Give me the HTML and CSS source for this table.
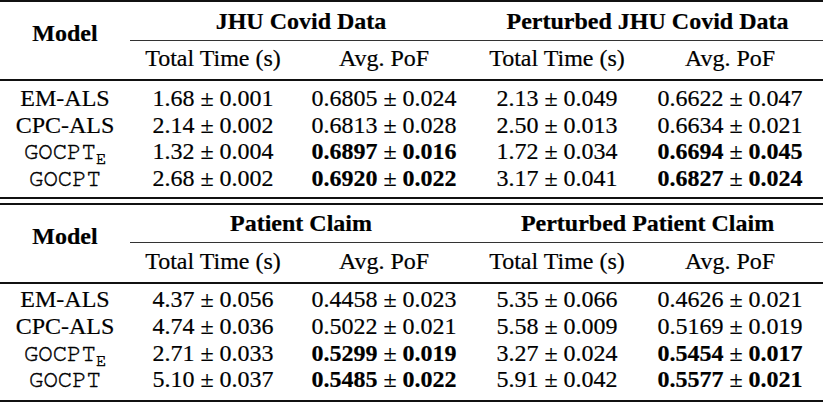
FILE: index.html
```html
<!DOCTYPE html>
<html lang="en">
<head>
<meta charset="utf-8">
<title>Results</title>
<link rel="stylesheet" href="styles.css">
</head>
<body>
<table class="res res-a">
  <colgroup><col class="c1"><col class="c2"><col class="c3"><col class="c4"><col class="c5"></colgroup>
  <thead>
    <tr class="grp">
      <th rowspan="2" class="model">Model</th>
      <th colspan="2" class="span">JHU Covid Data</th>
      <th colspan="2" class="span">Perturbed JHU Covid Data</th>
    </tr>
    <tr class="subh">
      <th>Total Time (s)</th><th>Avg. PoF</th><th>Total Time (s)</th><th class="last">Avg. PoF</th>
    </tr>
  </thead>
  <tbody>
    <tr class="first"><td>EM-ALS</td><td>1.68 ± 0.001</td><td>0.6805 ± 0.024</td><td>2.13 ± 0.049</td><td class="last">0.6622 ± 0.047</td></tr>
    <tr><td>CPC-ALS</td><td>2.14 ± 0.002</td><td>0.6813 ± 0.028</td><td>2.50 ± 0.013</td><td class="last">0.6634 ± 0.021</td></tr>
    <tr><td><span class="mono">GOCPT<sub>E</sub></span></td><td>1.32 ± 0.004</td><td><b>0.6897</b> ± <b>0.016</b></td><td>1.72 ± 0.034</td><td class="last"><b>0.6694</b> ± <b>0.045</b></td></tr>
    <tr class="lastrow"><td><span class="mono">GOCPT</span></td><td>2.68 ± 0.002</td><td><b>0.6920</b> ± <b>0.022</b></td><td>3.17 ± 0.041</td><td class="last"><b>0.6827</b> ± <b>0.024</b></td></tr>
  </tbody>
</table>
<table class="res res-b">
  <colgroup><col class="c1"><col class="c2"><col class="c3"><col class="c4"><col class="c5"></colgroup>
  <thead>
    <tr class="grp">
      <th rowspan="2" class="model">Model</th>
      <th colspan="2" class="span">Patient Claim</th>
      <th colspan="2" class="span">Perturbed Patient Claim</th>
    </tr>
    <tr class="subh">
      <th>Total Time (s)</th><th>Avg. PoF</th><th>Total Time (s)</th><th class="last">Avg. PoF</th>
    </tr>
  </thead>
  <tbody>
    <tr class="first"><td>EM-ALS</td><td>4.37 ± 0.056</td><td>0.4458 ± 0.023</td><td>5.35 ± 0.066</td><td class="last">0.4626 ± 0.021</td></tr>
    <tr><td>CPC-ALS</td><td>4.74 ± 0.036</td><td>0.5022 ± 0.021</td><td>5.58 ± 0.009</td><td class="last">0.5169 ± 0.019</td></tr>
    <tr><td><span class="mono">GOCPT<sub>E</sub></span></td><td>2.71 ± 0.033</td><td><b>0.5299</b> ± <b>0.019</b></td><td>3.27 ± 0.024</td><td class="last"><b>0.5454</b> ± <b>0.017</b></td></tr>
    <tr class="lastrow"><td><span class="mono">GOCPT</span></td><td>5.10 ± 0.037</td><td><b>0.5485</b> ± <b>0.022</b></td><td>5.91 ± 0.042</td><td class="last"><b>0.5577</b> ± <b>0.021</b></td></tr>
  </tbody>
</table>
</body>
</html>
```

FILE: styles.css
```css
html, body {
  margin: 0;
  padding: 0;
  background: #fff;
}

body {
  font-family: "Liberation Serif", "Times New Roman", serif;
  font-size: 24px;
  color: #000;
  -webkit-text-stroke: 0.2px #000;
}

.res {
  border-collapse: separate;
  border-spacing: 0;
  table-layout: fixed;
  width: 823px;
  border-top: 2px solid #111;
  border-bottom: 2px solid #111;
}

.res-b {
  margin-top: 4px;
}

.c1 { width: 130px; }
.c2 { width: 166px; }
.c3 { width: 176px; }
.c4 { width: 170px; }
.c5 { width: 181px; }

th, td {
  padding: 0;
  text-align: center;
  vertical-align: top;
  white-space: nowrap;
  line-height: 27px;
  font-weight: normal;
}

td {
  line-height: 26.67px;
}

th.model,
th.span {
  font-weight: bold;
}

th.model {
  border-bottom: 2px solid #111;
}

th.span {
  border-bottom: 1px solid #333;
}

.subh th {
  border-bottom: 2px solid #111;
}

th.last,
td.last {
  padding-right: 5px;
}

/* table A vertical rhythm */
.res-a th.model { padding-top: 17.6px; }
.res-a th.span { padding-top: 6px; padding-bottom: 5px; }
.res-a .subh th { padding-top: 4px; padding-bottom: 7px; }
.res-a .first td { padding-top: 4px; }
.res-a .lastrow td { padding-bottom: 5.33px; }

/* table B vertical rhythm */
.res-b th.model { padding-top: 18px; }
.res-b th.span { padding-top: 5px; padding-bottom: 5px; }
.res-b .subh th { padding-top: 5px; padding-bottom: 7px; }
.res-b .first td { padding-top: 2.3px; }
.res-b .lastrow td { padding-bottom: 7px; }

.mono {
  font-family: "Nimbus Mono PS", "Nimbus Mono L", "FreeMono", "Courier 10 Pitch", "Courier", "Liberation Mono", monospace;
  line-height: 0;
  color: #000;
  -webkit-text-stroke: 0.45px #000;
}

.mono sub {
  font-size: 17px;
  line-height: 0;
  vertical-align: -5px;
}

b {
  font-weight: bold;
}
```
